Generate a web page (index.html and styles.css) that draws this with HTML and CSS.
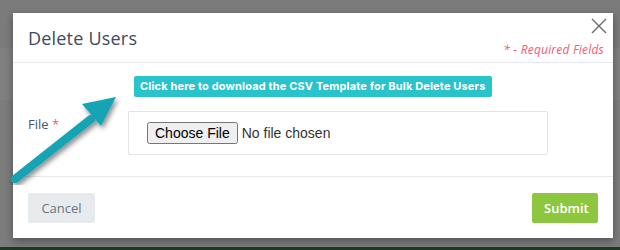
FILE: index.html
```html
<!DOCTYPE html>
<html>
<head>
<meta charset="utf-8">
<link rel="stylesheet" href="styles.css">
</head>
<body>
<div class="modal">
  <div class="modal-header">
    <h2 class="title">Delete Users</h2>
    <button class="close" aria-label="Close">
      <svg width="16" height="16" viewBox="0 0 16 16"><path d="M1 1L15 15M15 1L1 15" stroke="#6b6b6b" stroke-width="1.4" fill="none"/></svg>
    </button>
    <span class="required">* - Required Fields</span>
  </div>
  <div class="modal-body">
    <a class="csv-btn" href="#">Click here to download the CSV Template for Bulk Delete Users</a>
    <div class="row">
      <label class="label">File <span class="star">*</span></label>
      <div class="file-box"><input type="file" class="file-input"></div>
    </div>
    <svg class="arrow" width="130" height="110" viewBox="0 0 130 110">
      <defs>
        <filter id="sh" x="-20%" y="-20%" width="140%" height="140%">
          <feDropShadow dx="2" dy="3" stdDeviation="2.5" flood-color="#000" flood-opacity="0.45"/>
        </filter>
      </defs>
      <g filter="url(#sh)">
        <line x1="6" y1="104" x2="82" y2="44" stroke="#14a3b4" stroke-width="8.5" stroke-linecap="round"/>
        <polygon points="107,22 73,29 92,51" fill="#14a3b4"/>
      </g>
    </svg>
  </div>
  <div class="modal-footer">
    <button class="btn cancel">Cancel</button>
    <button class="btn submit">Submit</button>
  </div>
</div>
</body>
</html>
```

FILE: styles.css
```css
html, body {
  margin: 0;
  padding: 0;
}
body {
  width: 620px;
  height: 250px;
  overflow: hidden;
  background: linear-gradient(to bottom, #7b7b7b 0, #7b7b7b 48px, #808080 48px, #808080 100px, #7c7c7c 100px, #7c7c7c 247px, #1d3a22 247px);
  font-family: "Open Sans", "Liberation Sans", sans-serif;
  padding-top: 13px;
  padding-left: 13px;
  box-sizing: border-box;
}
.modal {
  width: 600px;
  height: 225px;
  background: #fff;
  box-shadow: 0 3px 8px rgba(0,0,0,0.35);
  display: flex;
  flex-direction: column;
  position: relative;
}
.modal-header {
  height: 49px;
  border-bottom: 1px solid #e7e9ec;
  position: relative;
  padding: 0 15px;
  display: flex;
  align-items: flex-start;
}
.title {
  margin: 13px 0 0 0;
  font-size: 18px;
  font-weight: 400;
  color: #3d4a5f;
  letter-spacing: 0.2px;
}
.close {
  position: absolute;
  right: 6px;
  top: 5px;
  background: none;
  border: 0;
  padding: 0;
  width: 16px;
  height: 16px;
  cursor: pointer;
}
.close svg { display: block; }
.required {
  position: absolute;
  right: 9px;
  top: 28px;
  font-size: 12px;
  font-style: italic;
  color: #f15b6f;
  letter-spacing: 0.2px;
}
.modal-body {
  height: 114px;
  border-bottom: 1px solid #e7e9ec;
  padding: 13px 15px 0 15px;
  box-sizing: border-box;
  position: relative;
}
.csv-btn {
  display: block;
  width: fit-content;
  margin-left: 106px;
  height: 21px;
  line-height: 21px;
  padding: 0 6px;
  background: #29c3cb;
  color: #fff;
  font-family: "Inter", "Liberation Sans", sans-serif;
  font-weight: 700;
  font-size: 11px;
  letter-spacing: 0.15px;
  text-decoration: none;
  border-radius: 2px;
  white-space: nowrap;
}
.row {
  display: flex;
  margin-top: 14px;
}
.label {
  width: 100px;
  font-size: 13px;
  color: #4a5568;
  padding-top: 4px;
}
.star { color: #f15b6f; }
.file-box {
  width: 420px;
  height: 44px;
  box-sizing: border-box;
  border: 1px solid #e3e3e3;
  border-radius: 2px;
  padding: 9px 18px;
}
.file-input {
  font-family: "Liberation Sans", Arial, sans-serif;
  font-size: 14px;
  color: #333;
}
.arrow {
  position: absolute;
  left: -4px;
  top: 12px;
}
.modal-footer {
  flex: 1;
  display: flex;
  justify-content: space-between;
  align-items: center;
  padding: 0 15px;
}
.btn {
  height: 30px;
  border: 0;
  border-radius: 2px;
  font-family: "Open Sans", "Liberation Sans", sans-serif;
  font-size: 13px;
  padding: 0 12px;
  cursor: pointer;
}
.cancel {
  width: 67px;
  background: #e8ebee;
  color: #6b7280;
}
.submit {
  width: 66px;
  background: #8dc63f;
  color: #fff;
  font-weight: 600;
}
```
